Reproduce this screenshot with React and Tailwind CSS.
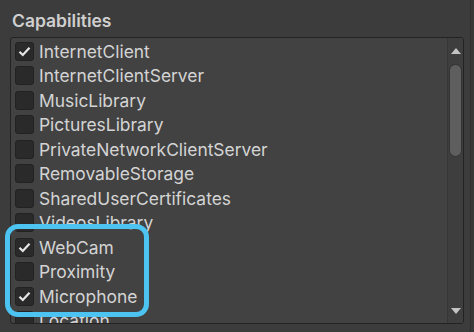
import React from 'react'

const items = [
    { name: 'InternetClient', on: true },
    { name: 'InternetClientServer', on: false },
    { name: 'MusicLibrary', on: false },
    { name: 'PicturesLibrary', on: false },
    { name: 'PrivateNetworkClientServer', on: false },
    { name: 'RemovableStorage', on: false },
    { name: 'SharedUserCertificates', on: false },
    { name: 'VideosLibrary', on: false },
    { name: 'WebCam', on: true },
    { name: 'Proximity', on: false },
    { name: 'Microphone', on: true },
    { name: 'Location', on: false },
]

const Check = ({ on }) => (
    <div className="w-[19px] h-[19px] rounded-[3px] bg-[#2a2a2a] border border-[#222] flex items-center justify-center flex-shrink-0">
        {on && (
            <svg width="13" height="11" viewBox="0 0 13 11">
                <path d="M1.5 5.8 L4.8 9 L11.5 1.8" fill="none" stroke="#e6e6e6" strokeWidth="2.2" />
            </svg>
        )}
    </div>
)

export default function App() {
    return (
        <div className="w-[474px] h-[332px] bg-[#3c3c3c] flex overflow-hidden relative" style={{ fontFamily: 'Inter, "Noto Sans", sans-serif' }}>
            <div className="flex-1 flex flex-col pl-[10px] pr-[2px]">
                <div className="h-[37px] pl-[2px] pt-[9px] text-[17.5px] font-semibold text-[#cfcfcf] leading-[24px]">
                    Capabilities
                </div>
                <div className="w-[454px] h-[287px] bg-[#424242] border border-[#232323] rounded-[3px] flex overflow-hidden">
                    <div className="flex-1 pt-[1px] pl-[4px] overflow-hidden">
                        {items.map((it) => (
                            <div key={it.name} className="h-[24.5px] flex items-center gap-[5px] whitespace-nowrap">
                                <Check on={it.on} />
                                <span className="text-[17.4px] text-[#d4d4d4] leading-none">{it.name}</span>
                            </div>
                        ))}
                    </div>
                    <div className="w-[16px] bg-[#3e3e3e] border-l border-[#363636] flex flex-col items-center">
                        <div className="h-[26px] flex items-center justify-center">
                            <svg width="10" height="6" viewBox="0 0 10 6"><path d="M0 6 L5 0 L10 6 Z" fill="#c4c4c4" /></svg>
                        </div>
                        <div className="w-[13px] h-[93px] rounded-full bg-[#5e5e5e] border border-[#333]" />
                        <div className="flex-1" />
                        <div className="h-[24px] flex items-center justify-center">
                            <svg width="10" height="6" viewBox="0 0 10 6"><path d="M0 0 L10 0 L5 6 Z" fill="#c4c4c4" /></svg>
                        </div>
                    </div>
                </div>
            </div>
            <div className="w-[4px] border-l border-[#2f2f2f] bg-[#383838]" />
            <div className="absolute left-[5px] top-[224px] w-[144px] h-[93px] rounded-[13px] border-[5px] border-[#4cc3f1]" />
        </div>
    )
}
